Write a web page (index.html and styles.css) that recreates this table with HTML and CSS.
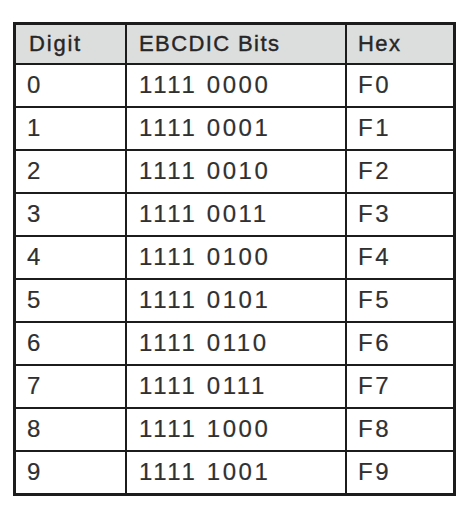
FILE: index.html
```html
<!DOCTYPE html>
<html>
<head>
<meta charset="utf-8">
<link rel="stylesheet" href="styles.css">
</head>
<body>
<table class="ebcdic">
  <thead>
    <tr><th class="c1">Digit</th><th class="c2">EBCDIC Bits</th><th class="c3">Hex</th></tr>
  </thead>
  <tbody>
    <tr><td>0</td><td>1111 0000</td><td>F0</td></tr>
    <tr><td>1</td><td>1111 0001</td><td>F1</td></tr>
    <tr><td>2</td><td>1111 0010</td><td>F2</td></tr>
    <tr><td>3</td><td>1111 0011</td><td>F3</td></tr>
    <tr><td>4</td><td>1111 0100</td><td>F4</td></tr>
    <tr><td>5</td><td>1111 0101</td><td>F5</td></tr>
    <tr><td>6</td><td>1111 0110</td><td>F6</td></tr>
    <tr><td>7</td><td>1111 0111</td><td>F7</td></tr>
    <tr><td>8</td><td>1111 1000</td><td>F8</td></tr>
    <tr><td>9</td><td>1111 1001</td><td>F9</td></tr>
  </tbody>
</table>
</body>
</html>
```
FILE: styles.css
```css
html, body {
  margin: 0;
  padding: 0;
  background: #ffffff;
}

body {
  padding: 22px 0 0 13px;
  font-family: "Liberation Sans", Arial, sans-serif;
  color: #2b2b2b;
}

.ebcdic {
  border-collapse: separate;
  border-spacing: 0;
  border: 3px solid #1c1c1c;
  table-layout: fixed;
  width: 443px;
}

.ebcdic th,
.ebcdic td {
  text-align: left;
  padding: 0 0 0 11px;
  border-right: 2px solid #1c1c1c;
  border-bottom: 2px solid #1c1c1c;
  white-space: nowrap;
  overflow: hidden;
}

.ebcdic th:last-child,
.ebcdic td:last-child {
  border-right: none;
}

.ebcdic tbody tr:last-child td {
  border-bottom: none;
}

.ebcdic th {
  background: #dcdddd;
  font-weight: normal;
  font-size: 22px;
  letter-spacing: 1.4px;
  height: 38px;
  line-height: 38px;
  color: #262626;
  -webkit-text-stroke: 0.4px #262626;
}

.ebcdic th.c1 {
  padding-left: 13px;
  letter-spacing: 1.8px;
}

.ebcdic td {
  font-size: 24px;
  letter-spacing: 2.6px;
  height: 39px;
  line-height: 36px;
  padding-bottom: 2px;
  vertical-align: middle;
  color: #303030;
  -webkit-text-stroke: 0.2px #303030;
}

.ebcdic .c1 { width: 98px; }
.ebcdic th.c1 { width: 96px; }
.ebcdic .c2 { width: 206px; padding-left: 12px; }
.ebcdic .c3 { width: 95px; }

.ebcdic td:nth-child(2) {
  padding-left: 12px;
}
```
